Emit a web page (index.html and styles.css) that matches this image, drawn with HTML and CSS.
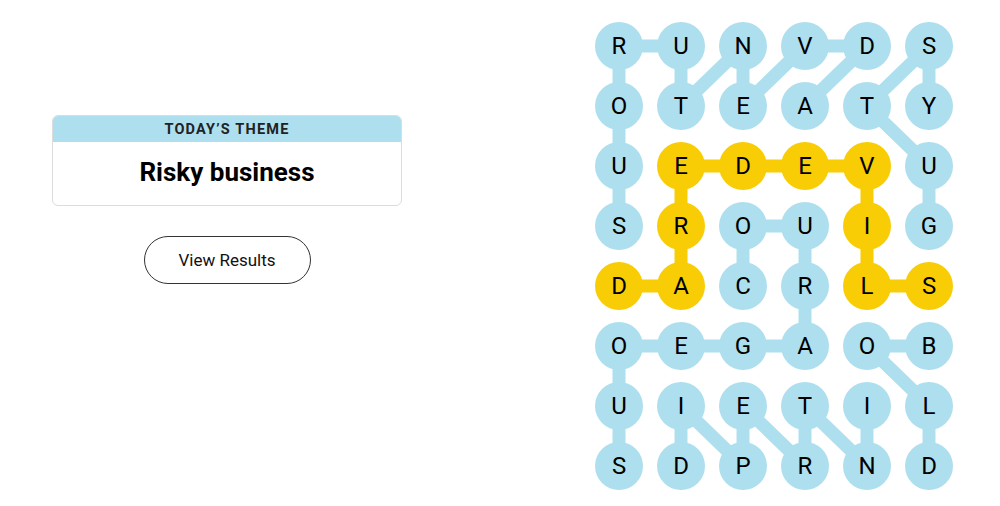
FILE: index.html
```html
<!DOCTYPE html>
<html>
<head>
<meta charset="utf-8">
<link rel="stylesheet" href="styles.css">
</head>
<body>
<main class="page">
  <section class="side">
    <div class="theme-card">
      <div class="theme-head">TODAY’S THEME</div>
      <div class="theme-body">Risky business</div>
    </div>
    <button class="results-btn">View Results</button>
  </section>
  <section class="board">
    <svg class="links" width="358" height="468" viewBox="0 0 358 468">
      <g stroke="#aedfee" stroke-width="13" fill="none">
        <line x1="24" y1="24" x2="86" y2="24"/>
        <line x1="24" y1="24" x2="24" y2="84"/>
        <line x1="24" y1="84" x2="24" y2="144"/>
        <line x1="24" y1="144" x2="24" y2="204"/>
        <line x1="86" y1="24" x2="86" y2="84"/>
        <line x1="86" y1="84" x2="148" y2="24"/>
        <line x1="148" y1="24" x2="148" y2="84"/>
        <line x1="148" y1="84" x2="210" y2="24"/>
        <line x1="210" y1="24" x2="272" y2="24"/>
        <line x1="272" y1="24" x2="210" y2="84"/>
        <line x1="334" y1="24" x2="272" y2="84"/>
        <line x1="334" y1="24" x2="334" y2="84"/>
        <line x1="272" y1="84" x2="334" y2="144"/>
        <line x1="334" y1="144" x2="334" y2="204"/>
        <line x1="148" y1="204" x2="210" y2="204"/>
        <line x1="148" y1="204" x2="148" y2="264"/>
        <line x1="210" y1="204" x2="210" y2="264"/>
        <line x1="210" y1="264" x2="210" y2="324"/>
        <line x1="24" y1="324" x2="210" y2="324"/>
        <line x1="272" y1="324" x2="334" y2="324"/>
        <line x1="272" y1="324" x2="334" y2="384"/>
        <line x1="24" y1="324" x2="24" y2="444"/>
        <line x1="86" y1="384" x2="86" y2="444"/>
        <line x1="86" y1="384" x2="148" y2="444"/>
        <line x1="148" y1="384" x2="148" y2="444"/>
        <line x1="148" y1="384" x2="210" y2="444"/>
        <line x1="210" y1="384" x2="210" y2="444"/>
        <line x1="210" y1="384" x2="272" y2="444"/>
        <line x1="272" y1="384" x2="272" y2="444"/>
        <line x1="334" y1="384" x2="334" y2="444"/>
      </g>
      <polyline stroke="#f8cd05" stroke-width="13" fill="none"
        points="24,264 86,264 86,144 272,144 272,264 334,264"/>
    </svg>
    <div class="grid">
      <span class="cell">R</span><span class="cell">U</span><span class="cell">N</span><span class="cell">V</span><span class="cell">D</span><span class="cell">S</span>
      <span class="cell">O</span><span class="cell">T</span><span class="cell">E</span><span class="cell">A</span><span class="cell">T</span><span class="cell">Y</span>
      <span class="cell">U</span><span class="cell gold">E</span><span class="cell gold">D</span><span class="cell gold">E</span><span class="cell gold">V</span><span class="cell">U</span>
      <span class="cell">S</span><span class="cell gold">R</span><span class="cell">O</span><span class="cell">U</span><span class="cell gold">I</span><span class="cell">G</span>
      <span class="cell gold">D</span><span class="cell gold">A</span><span class="cell">C</span><span class="cell">R</span><span class="cell gold">L</span><span class="cell gold">S</span>
      <span class="cell">O</span><span class="cell">E</span><span class="cell">G</span><span class="cell">A</span><span class="cell">O</span><span class="cell">B</span>
      <span class="cell">U</span><span class="cell">I</span><span class="cell">E</span><span class="cell">T</span><span class="cell">I</span><span class="cell">L</span>
      <span class="cell">S</span><span class="cell">D</span><span class="cell">P</span><span class="cell">R</span><span class="cell">N</span><span class="cell">D</span>
    </div>
  </section>
</main>
</body>
</html>
```

FILE: styles.css
```css
html, body {
  margin: 0;
  padding: 0;
  background: #ffffff;
}

.page {
  display: flex;
  align-items: flex-start;
  width: 1000px;
  height: 506px;
  box-sizing: border-box;
  padding-left: 52px;
  font-family: Roboto, "Liberation Sans", sans-serif;
  color: #000;
}

.side {
  width: 350px;
  padding-top: 115px;
  display: flex;
  flex-direction: column;
  align-items: center;
}

.theme-card {
  width: 100%;
  box-sizing: border-box;
  border: 1px solid #dcdcdc;
  border-radius: 6px;
  overflow: hidden;
}

.theme-head {
  background: #aedfee;
  height: 26px;
  line-height: 27px;
  text-align: center;
  font-size: 14.5px;
  font-weight: 700;
  letter-spacing: 1.2px;
  color: #222;
}

.theme-body {
  height: 63px;
  line-height: 60px;
  text-align: center;
  font-size: 26px;
  font-weight: 700;
  color: #000;
}

.results-btn {
  margin-top: 30px;
  width: 167px;
  height: 48px;
  border: 1px solid #333;
  border-radius: 24px;
  background: #fff;
  font-family: Roboto, "Liberation Sans", sans-serif;
  font-size: 17px;
  color: #111;
  padding: 0;
}

.board {
  position: relative;
  margin-left: 193px;
  margin-top: 22px;
  width: 358px;
  height: 468px;
}

.links {
  position: absolute;
  left: 0;
  top: 0;
}

.grid {
  position: relative;
  display: grid;
  grid-template-columns: repeat(6, 48px);
  grid-auto-rows: 48px;
  column-gap: 14px;
  row-gap: 12px;
}

.cell {
  width: 48px;
  height: 48px;
  border-radius: 50%;
  background: #aedfee;
  display: flex;
  align-items: center;
  justify-content: center;
  font-size: 24px;
  color: #000;
}

.cell.gold {
  background: #f8cd05;
}
```
